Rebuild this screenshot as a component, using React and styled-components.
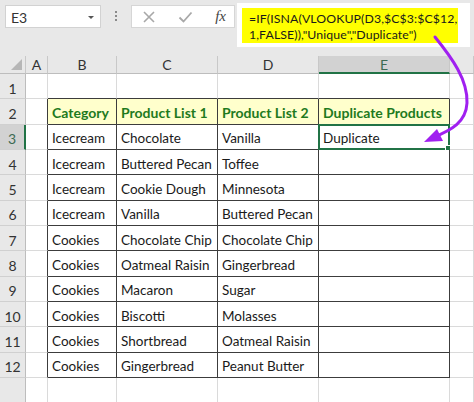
import { createGlobalStyle, styled } from "styled-components";

const GlobalStyle = createGlobalStyle`
  html, body {
    margin: 0;
    padding: 0;
    background: #ffffff;
  }
  #root {
    width: 474px;
    height: 402px;
    overflow: hidden;
  }
`;

const green = "#217346";
const dark = "#3c3c3c";
const grid = "#dadada";

const Sheet = styled.div`
  position: relative;
  width: 474px;
  height: 402px;
  font-family: Lato, "Liberation Sans", sans-serif;
  background: #e8e8e8;
`;

const TopBar = styled.div`
  display: flex;
  align-items: flex-start;
  height: 56px;
  padding: 5px 0 0 5px;
  box-sizing: border-box;
`;

const NameBox = styled.div`
  display: flex;
  align-items: center;
  justify-content: space-between;
  width: 96px;
  height: 23px;
  box-sizing: border-box;
  background: #fff;
  border: 1px solid #d2d2d2;
  padding: 1px 6px 0 5px;
  font-size: 14px;
  color: #333;
`;

const Caret = styled.span`
  width: 0;
  height: 0;
  border-left: 3px solid transparent;
  border-right: 3px solid transparent;
  border-top: 3px solid #555;
`;

const Dots = styled.div`
  display: flex;
  flex-direction: column;
  gap: 2px;
  width: 30px;
  align-items: center;
  padding-top: 6px;

  span {
    width: 2px;
    height: 2px;
    background: #8a8a8a;
  }
`;

const FuncBox = styled.div`
  display: flex;
  align-items: center;
  justify-content: space-between;
  width: 104px;
  height: 23px;
  box-sizing: border-box;
  background: #fff;
  border: 1px solid #d6d6d6;
  padding: 0 8px 0 10px;
  margin-right: 2px;
`;

const FxText = styled.span`
  font-family: "Liberation Serif", serif;
  font-style: italic;
  font-size: 15px;
  color: #444;
`;

const FormulaBox = styled.div`
  margin-top: -2px;
  width: 233px;
  height: 44px;
  box-sizing: border-box;
  background: #fff;
  padding: 5px 12px 4px 5px;
`;

const Highlight = styled.div`
  height: 35px;
  background: #ffff00;
  padding: 3px 0 0 7px;
  box-sizing: border-box;
  font-size: 12.3px;
  line-height: 16px;
  letter-spacing: 0.1px;
  color: #1a1a1a;
  white-space: nowrap;
`;

const Grid = styled.div`
  display: grid;
  grid-template-columns: 26px 22px 69px 101px 101px 131px 24px;
  grid-template-rows: 18px repeat(12, 25.33px) 30px;
  background: #fff;
`;

const ColHead = styled.div`
  display: flex;
  align-items: center;
  justify-content: center;
  box-sizing: border-box;
  background: ${(p) => (p.$active ? "#d2d2d2" : "#e8e8e8")};
  border-right: 1px solid #c8c8c8;
  border-bottom: ${(p) => (p.$active ? `2px solid ${green}` : "1px solid #bdbdbd")};
  font-size: 14px;
  color: ${(p) => (p.$active ? "#3d6b52" : "#333")};
`;

const Corner = styled.div`
  position: relative;
  box-sizing: border-box;
  background: #e8e8e8;
  border-right: 1px solid #c8c8c8;
  border-bottom: 1px solid #bdbdbd;

  &::after {
    content: "";
    position: absolute;
    right: 3px;
    bottom: 3px;
    border-left: 11px solid transparent;
    border-bottom: 11px solid #b6b6b6;
  }
`;

const RowHead = styled.div`
  display: flex;
  align-items: center;
  justify-content: center;
  box-sizing: border-box;
  padding-top: 4px;
  background: ${(p) => (p.$active ? "#d2d2d2" : "#e8e8e8")};
  border-right: ${(p) => (p.$active ? `2px solid ${green}` : "1px solid #bdbdbd")};
  border-bottom: 1px solid #d0d0d0;
  font-size: 14px;
  color: ${(p) => (p.$active ? "#3d6b52" : "#333")};
`;

const Cell = styled.div`
  position: relative;
  display: flex;
  align-items: center;
  box-sizing: border-box;
  padding: 3px 0 0 4px;
  white-space: nowrap;
  background: ${(p) => (p.$head ? "#ffffcc" : "#fff")};
  border-right: 1px solid ${(p) => p.$rb || grid};
  border-bottom: 1px solid ${(p) => p.$bb || grid};
  font-size: ${(p) => (p.$head ? "14px" : "13.5px")};
  font-weight: ${(p) => (p.$head ? 700 : 400)};
  color: ${(p) => (p.$head ? "#1e7a1e" : "#1a1a1a")};
`;

const Selection = styled.div`
  position: absolute;
  left: -1px;
  top: -1px;
  right: -1px;
  bottom: -1px;
  border: 2px solid ${green};
  pointer-events: none;

  &::after {
    content: "";
    position: absolute;
    right: -4px;
    bottom: -4px;
    width: 5px;
    height: 5px;
    background: ${green};
    border: 1px solid #fff;
  }
`;

const Arrow = styled.svg`
  position: absolute;
  left: 0;
  top: 0;
  pointer-events: none;
`;

const columns = ["A", "B", "C", "D", "E", ""];

const rows = [
  ["Category", "Product List 1", "Product List 2", "Duplicate Products"],
  ["Icecream", "Chocolate", "Vanilla", "Duplicate"],
  ["Icecream", "Buttered Pecan", "Toffee", ""],
  ["Icecream", "Cookie Dough", "Minnesota", ""],
  ["Icecream", "Vanilla", "Buttered Pecan", ""],
  ["Cookies", "Chocolate Chip", "Chocolate Chip", ""],
  ["Cookies", "Oatmeal Raisin", "Gingerbread", ""],
  ["Cookies", "Macaron", "Sugar", ""],
  ["Cookies", "Biscotti", "Molasses", ""],
  ["Cookies", "Shortbread", "Oatmeal Raisin", ""],
  ["Cookies", "Gingerbread", "Peanut Butter", ""],
];

function App() {
  const renderRow = (num, values) => {
    const inTable = values !== null;
    const isHead = num === 2;
    const aboveTable = num === 1;
    return [
      <RowHead key={`h${num}`} $active={num === 3}>
        {num}
      </RowHead>,
      <Cell key={`a${num}`} $rb={inTable ? dark : grid} />,
      ...[0, 1, 2, 3].map((i) => (
        <Cell
          key={`c${num}-${i}`}
          $head={isHead}
          $rb={inTable ? dark : grid}
          $bb={inTable || aboveTable ? dark : grid}
        >
          {inTable ? values[i] : ""}
          {num === 3 && i === 3 && <Selection />}
        </Cell>
      )),
      <Cell key={`f${num}`} />,
    ];
  };

  return (
    <>
      <GlobalStyle />
      <Sheet>
        <TopBar>
          <NameBox>
            E3
            <Caret />
          </NameBox>
          <Dots>
            <span />
            <span />
            <span />
          </Dots>
          <FuncBox>
            <svg width="14" height="14" viewBox="0 0 14 14">
              <path d="M2 2 L12 12 M12 2 L2 12" stroke="#a8a8a8" strokeWidth="1.6" fill="none" />
            </svg>
            <svg width="15" height="14" viewBox="0 0 15 14">
              <path d="M1.5 7.5 L5.5 11.5 L13.5 2.5" stroke="#a8a8a8" strokeWidth="1.8" fill="none" />
            </svg>
            <FxText>fx</FxText>
          </FuncBox>
          <FormulaBox>
            <Highlight>
              =IF(ISNA(VLOOKUP(D3,$C$3:$C$12,
              <br />
              1,FALSE)),"Unique","Duplicate")
            </Highlight>
          </FormulaBox>
        </TopBar>
        <Grid>
          <Corner />
          {columns.map((c) => (
            <ColHead key={c || "f"} $active={c === "E"}>
              {c}
            </ColHead>
          ))}
          {renderRow(1, null)}
          {rows.map((r, i) => renderRow(i + 2, r))}
          <RowHead>{""}</RowHead>
          <Cell />
          <Cell />
          <Cell />
          <Cell />
          <Cell />
          <Cell />
        </Grid>
        <Arrow width="474" height="402" viewBox="0 0 474 402">
          <path
            d="M435 37 C452 58, 468 80, 467 103 C466 122, 452 130, 432 138"
            stroke="#a020f0"
            strokeWidth="3"
            fill="none"
            strokeLinecap="round"
          />
          <path d="M424 142 L437 129 L443 141 Z" fill="#a020f0" />
        </Arrow>
      </Sheet>
    </>
  );
}

export default App;
